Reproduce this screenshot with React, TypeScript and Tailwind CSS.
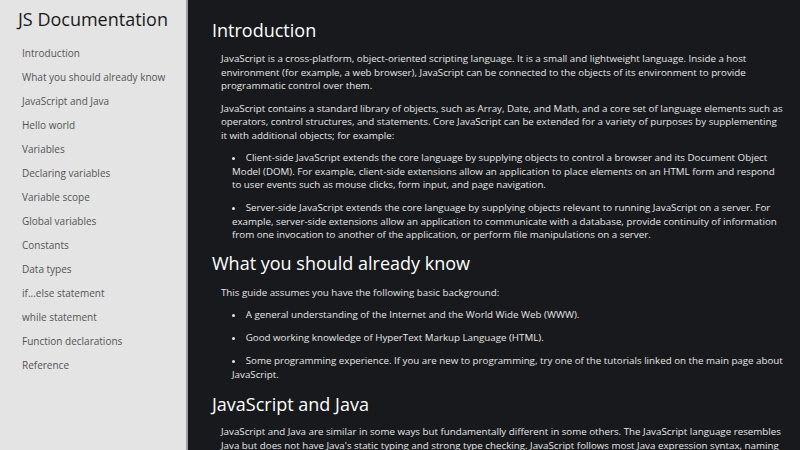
const navItems = [
  "Introduction",
  "What you should already know",
  "JavaScript and Java",
  "Hello world",
  "Variables",
  "Declaring variables",
  "Variable scope",
  "Global variables",
  "Constants",
  "Data types",
  "if...else statement",
  "while statement",
  "Function declarations",
  "Reference",
];

export default function App() {
  return (
    <div
      className="flex h-[450px] w-[800px] overflow-hidden bg-[#17191c]"
      style={{ fontFamily: '"Open Sans", "Noto Sans", sans-serif' }}
    >
      <nav className="w-[188px] shrink-0 border-r-2 border-[#a0a0a0] bg-[#e4e4e4]">
        <header className="pl-[18px] pt-[7px] text-[18px] leading-[24px] text-[#1a1a1a]">
          JS Documentation
        </header>
        <ul className="mt-[10px]">
          {navItems.map((item) => (
            <li key={item} className="pl-[22px] text-[10px] leading-[24px] text-[#555]">
              {item}
            </li>
          ))}
        </ul>
      </nav>

      <main className="flex-1 pl-[24px] pr-[16px] pt-[18px] text-[9.75px] leading-[13.5px] text-[#e6e6e6]">
        <section>
          <h2 className="mb-[10px] text-[18px] leading-[24px] text-white">Introduction</h2>
          <p className="mb-[9px] ml-[9px]">
            JavaScript is a cross-platform, object-oriented scripting language. It is a small and lightweight
            language. Inside a host environment (for example, a web browser), JavaScript can be connected to the
            objects of its environment to provide programmatic control over them.
          </p>
          <p className="mb-[9px] ml-[9px]">
            JavaScript contains a standard library of objects, such as Array, Date, and Math, and a core set of
            language elements such as operators, control structures, and statements. Core JavaScript can be extended
            for a variety of purposes by supplementing it with additional objects; for example:
          </p>
          <ul className="ml-[20px] list-inside list-disc">
            <li className="mb-[9.5px]">
              Client-side JavaScript extends the core language by supplying objects to control a browser and its
              Document Object Model (DOM). For example, client-side extensions allow an application to place
              elements on an HTML form and respond to user events such as mouse clicks, form input, and page
              navigation.
            </li>
            <li className="mb-[9px]">
              Server-side JavaScript extends the core language by supplying objects relevant to running JavaScript
              on a server. For example, server-side extensions allow an application to communicate with a database,
              provide continuity of information from one invocation to another of the application, or perform file
              manipulations on a server.
            </li>
          </ul>
        </section>

        <section>
          <h2 className="mb-[11px] mt-[9px] text-[18px] leading-[24px] text-white">What you should already know</h2>
          <p className="mb-[9px] ml-[9px]">This guide assumes you have the following basic background:</p>
          <ul className="ml-[20px] list-inside list-disc">
            <li className="mb-[9.5px]">A general understanding of the Internet and the World Wide Web (WWW).</li>
            <li className="mb-[9.5px]">Good working knowledge of HyperText Markup Language (HTML).</li>
            <li className="mb-[9.5px]">
              Some programming experience. If you are new to programming, try one of the tutorials linked on the
              main page about JavaScript.
            </li>
          </ul>
        </section>

        <section>
          <h2 className="mb-[9px] mt-[11px] text-[18px] leading-[24px] text-white">JavaScript and Java</h2>
          <p className="mb-[9px] ml-[9px]">
            JavaScript and Java are similar in some ways but fundamentally different in some others. The JavaScript
            language resembles Java but does not have Java's static typing and strong type checking. JavaScript
            follows most Java expression syntax, naming conventions and basic control-flow constructs.
          </p>
        </section>
      </main>
    </div>
  );
}
